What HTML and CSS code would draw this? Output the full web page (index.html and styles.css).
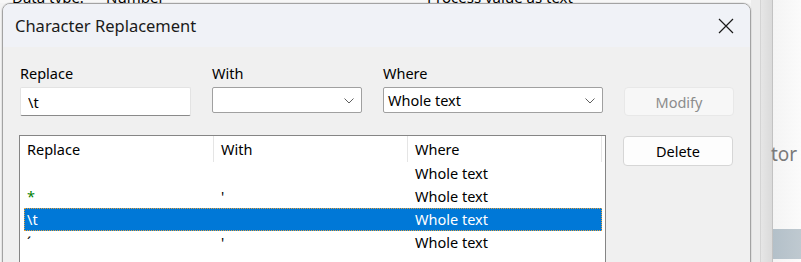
FILE: index.html
```html
<!DOCTYPE html>
<html lang="en">
<head>
  <meta charset="UTF-8" />
  <title>Character Replacement</title>
  <link rel="stylesheet" href="styles.css">
</head>
<body>
  <div class="desk">
    <div class="behind-top">
      <span class="bt-cell bt-a">Data type:</span>
      <span class="bt-cell bt-b">Number</span>
      <span class="bt-cell bt-c"></span>
      <span class="bt-cell bt-d">Process value as text</span>
    </div>
    <div class="behind-side">
      <div class="bs-gutter"></div>
      <div class="bs-track"></div>
      <div class="bs-pane">
        <span class="bs-text">tor</span>
        <div class="bs-bar"></div>
      </div>
    </div>

    <div class="dialog">
      <div class="titlebar">
        <span class="title">Character Replacement</span>
        <span class="close">
          <svg width="16" height="16" viewBox="0 0 16 16"><path d="M1 1 L15 15 M15 1 L1 15" stroke="#1a1a1a" stroke-width="1.2" fill="none"/></svg>
        </span>
      </div>

      <div class="body">
        <div class="fields">
          <div class="field">
            <label>Replace</label>
            <input class="edit" type="text" value="\t" />
          </div>
          <div class="field">
            <label>With</label>
            <div class="combo">
              <span></span>
              <svg width="10" height="6" viewBox="0 0 10 6"><path d="M0.5 0.5 L5 5 L9.5 0.5" stroke="#5f5f5f" stroke-width="1" fill="none"/></svg>
            </div>
          </div>
          <div class="field">
            <label>Where</label>
            <div class="combo">
              <span>Whole text</span>
              <svg width="10" height="6" viewBox="0 0 10 6"><path d="M0.5 0.5 L5 5 L9.5 0.5" stroke="#5f5f5f" stroke-width="1" fill="none"/></svg>
            </div>
          </div>
          <button class="btn btn-modify" disabled>Modify</button>
        </div>

        <div class="lower">
          <div class="list">
            <div class="list-head">
              <div class="hcell">Replace</div>
              <div class="hcell">With</div>
              <div class="hcell">Where</div>
            </div>
            <div class="row">
              <div class="cell"></div>
              <div class="cell"></div>
              <div class="cell">Whole text</div>
            </div>
            <div class="row">
              <div class="cell green">*</div>
              <div class="cell">'</div>
              <div class="cell">Whole text</div>
            </div>
            <div class="row selected">
              <div class="cell">\t</div>
              <div class="cell"></div>
              <div class="cell">Whole text</div>
            </div>
            <div class="row">
              <div class="cell">´</div>
              <div class="cell">'</div>
              <div class="cell">Whole text</div>
            </div>
          </div>
          <button class="btn btn-delete">Delete</button>
        </div>
      </div>
    </div>
  </div>
</body>
</html>
```

FILE: styles.css
```css
html, body {
  margin: 0;
  padding: 0;
}
body {
  width: 801px;
  height: 262px;
  overflow: hidden;
  font-family: 'Noto Sans', 'Open Sans', sans-serif;
  font-size: 14.5px;
  color: #000;
  background: #f3f3f3;
}
.desk {
  position: relative;
  width: 801px;
  height: 262px;
}

/* window behind the dialog */
.behind-top {
  position: absolute;
  left: 0;
  top: 0;
  width: 801px;
  height: 3px;
  overflow: hidden;
  background: #f7f7f7;
  display: flex;
}
.bt-cell {
  display: block;
  height: 3px;
  line-height: 3px;
  font-size: 15px;
  white-space: nowrap;
  position: relative;
  top: -4px;
}
.bt-a { width: 88px; padding-left: 12px; }
.bt-b { width: 275px; padding-left: 5px; border-left: 1px solid #c4c4c4; }
.bt-c { width: 39px; border-left: 1px solid #c4c4c4; }
.bt-d { width: 355px; padding-left: 5px; border-left: 1px solid #c4c4c4; }

.behind-side {
  position: absolute;
  left: 751px;
  top: 0;
  width: 50px;
  height: 262px;
  display: flex;
}
.bs-gutter {
  width: 9px;
  background: #ececec;
  border-right: 1px solid #d4d4d4;
}
.bs-track {
  width: 11px;
  background: linear-gradient(to right, #e6e6e6, #dadada);
  border-right: 1px solid #c2c2c2;
}
.bs-pane {
  flex: 1;
  background: linear-gradient(to right, #f4f4f4, #fbfbfb);
  display: flex;
  flex-direction: column;
}
.bs-text {
  margin-top: 142px;
  margin-left: -2px;
  font-size: 19px;
  line-height: 24px;
  color: #7a7a7a;
}
.bs-bar {
  margin-top: 63px;
  height: 30px;
  background: linear-gradient(to right, #b3c0c9, #bfc9d0);
}

/* dialog */
.dialog {
  position: absolute;
  left: 2px;
  top: 3px;
  width: 747px;
  height: 300px;
  border: 1px solid #a3a3a3;
  border-radius: 8px 8px 0 0;
  background: #f0f0f0;
  overflow: hidden;
  box-shadow: 0 0 0 1px rgba(0,0,0,0.06);
}
.titlebar {
  height: 43px;
  background: #f0f2f7;
  display: flex;
  align-items: center;
  justify-content: space-between;
  padding: 0 16px 0 12px;
}
.title {
  font-size: 16.5px;
  color: #1a1a1a;
  margin-top: -1px;
}
.close {
  display: flex;
  width: 16px;
  height: 16px;
  margin-top: 1px;
}

.body {
  padding: 16px 0 0 17px;
}
.fields {
  display: grid;
  grid-template-columns: 171px 150px 220px 110px;
  column-gap: 21px;
  align-items: start;
}
.field label {
  display: block;
  line-height: 20px;
  height: 20px;
  margin-bottom: 4px;
}
.edit {
  box-sizing: border-box;
  width: 171px;
  height: 29px;
  margin: 0;
  padding: 0 7px;
  border: 1px solid #e3e3e3;
  border-bottom: 1px solid #8a8a8a;
  border-radius: 2px;
  background: #fff;
  font: inherit;
  color: #000;
  outline: none;
}
.combo {
  box-sizing: border-box;
  height: 26px;
  border: 1px solid #a0a0a0;
  border-radius: 2px;
  background: #fff;
  display: flex;
  align-items: center;
  justify-content: space-between;
  padding: 0 7px 0 4px;
}
.combo svg {
  margin-top: 1px;
}

.btn {
  box-sizing: border-box;
  width: 110px;
  height: 30px;
  border: 1px solid #d6d6d6;
  border-radius: 4px;
  background: #fdfdfd;
  font: inherit;
  color: #000;
  padding: 0;
}
.btn-modify {
  margin-top: 24px;
  height: 29px;
  background: #f7f7f7;
  border-color: #e8e8e8;
  color: #8c8c8c;
}

.lower {
  display: flex;
  align-items: flex-start;
  margin-top: 19px;
  margin-left: -1px;
}
.btn-delete {
  margin-left: 17px;
  margin-top: 1px;
}
.list {
  box-sizing: border-box;
  width: 587px;
  height: 200px;
  border: 1px solid #858585;
  background: #fff;
}
.list-head {
  display: grid;
  grid-template-columns: 194px 194px 194px;
  height: 26px;
}
.hcell {
  padding-left: 7px;
  line-height: 26px;
  border-right: 1px solid #e5e5e5;
}
.row {
  display: grid;
  grid-template-columns: 189px 194px 194px;
  margin-left: 4px;
  width: 578px;
  height: 23px;
  box-sizing: border-box;
  border: 1px solid transparent;
}
.cell {
  line-height: 21px;
  padding-left: 7px;
  white-space: pre;
}
.cell:first-child {
  padding-left: 2px;
}
.green {
  color: #008000;
}
.row.selected {
  background: #0078d7;
  color: #fff;
  border: 1px dotted #e0a040;
}
```
